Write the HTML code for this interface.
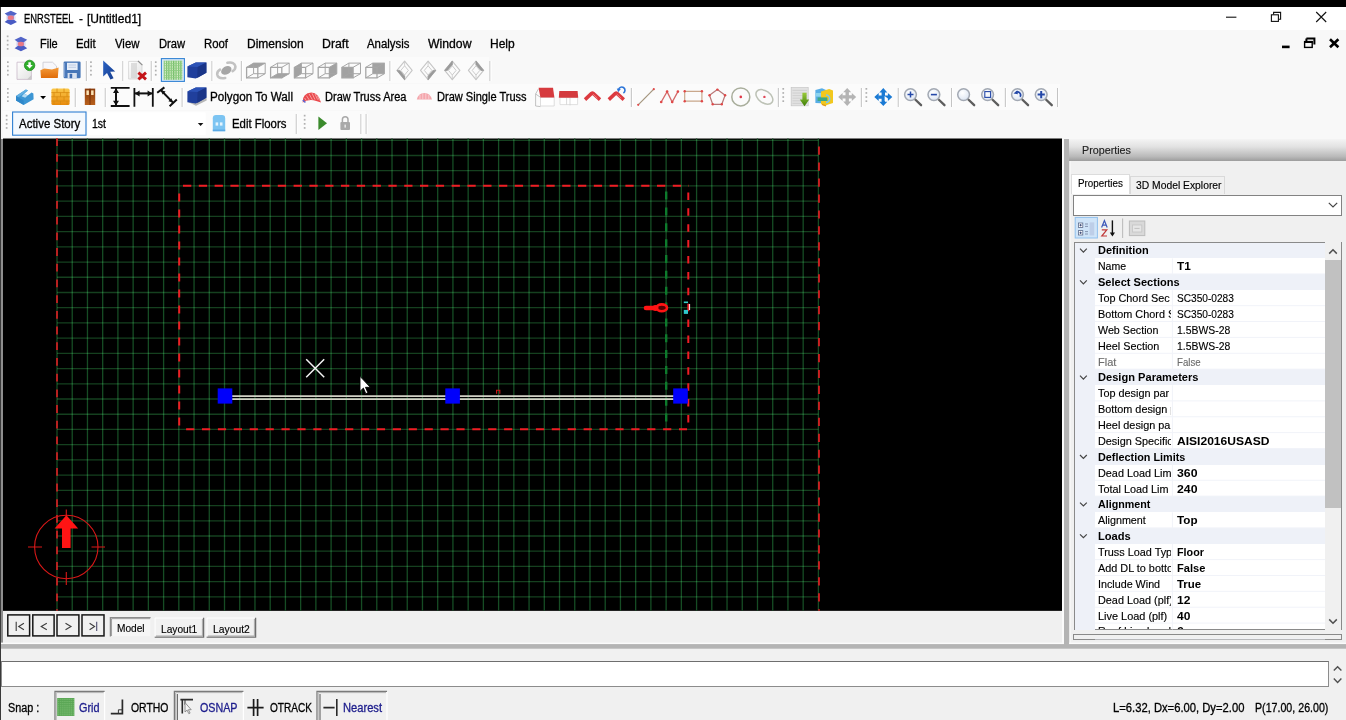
<!DOCTYPE html>
<html><head><meta charset="utf-8"><title>ENRSTEEL - [Untitled1]</title><style>
html,body{margin:0;padding:0;background:#f0f0f0;}
body{width:1346px;height:720px;position:relative;overflow:hidden;font-family:"Liberation Sans", sans-serif;}
body>div,body>span,body>svg{position:absolute;}
body>span{white-space:pre;line-height:1;transform-origin:0 0;}
body>div{box-sizing:border-box;}
.t{position:absolute;white-space:pre;line-height:1;transform-origin:0 0;}
</style></head>
<body>
<div style="left:0px;top:0px;width:1346px;height:7px;background:#000;"></div>
<div style="left:0px;top:7px;width:1346px;height:23px;background:#fff;"></div>
<div style="left:0px;top:30px;width:1346px;height:109px;background:#f8f8f8;"></div>
<div style="left:0px;top:7px;width:1px;height:713px;background:#3a3a3a;"></div>
<div style="left:1px;top:30px;width:1345px;height:27px;background:#f8f8f8;"></div>
<div style="left:3px;top:57px;width:485.5px;height:26px;background:#fbfbfb;"></div>
<div style="left:3px;top:84px;width:1057px;height:26px;background:#fbfbfb;"></div>
<div style="left:3px;top:110.5px;width:363px;height:26.5px;background:#fbfbfb;"></div>
<svg style="left:0px;top:30px;" width="1346" height="109" viewBox="0 30 1346 109"><defs>
<linearGradient id="gPage" x1="0" y1="0" x2="1" y2="1"><stop offset="0" stop-color="#fff"/><stop offset="1" stop-color="#e2e2e2"/></linearGradient>
<linearGradient id="gOr" x1="0" y1="0" x2="0" y2="1"><stop offset="0" stop-color="#f39a3a"/><stop offset="1" stop-color="#e06c08"/></linearGradient>
<linearGradient id="gWall" x1="0" y1="0" x2="0" y2="1"><stop offset="0" stop-color="#fbc84a"/><stop offset="1" stop-color="#e88a0c"/></linearGradient>
<linearGradient id="gDoor" x1="0" y1="0" x2="0" y2="1"><stop offset="0" stop-color="#8a3c0c"/><stop offset="1" stop-color="#b8601c"/></linearGradient>
<linearGradient id="gGreen" x1="0" y1="0" x2="0" y2="1"><stop offset="0" stop-color="#9acb3a"/><stop offset="1" stop-color="#3f7f08"/></linearGradient>
<linearGradient id="gBlueArrow" x1="0" y1="0" x2="1" y2="1"><stop offset="0" stop-color="#2a62c4"/><stop offset="1" stop-color="#163c8c"/></linearGradient>
<radialGradient id="gLens" cx=".4" cy=".35" r=".7"><stop offset="0" stop-color="#fff"/><stop offset="1" stop-color="#dbe4f2"/></radialGradient>
<pattern id="pGrid" x="163.5" y="60.5" width="2.4" height="2.4" patternUnits="userSpaceOnUse"><rect width="2.4" height="2.4" fill="#d6eec6"/><path d="M.6 0V2.4" stroke="#6cba62" stroke-width="1.1"/><path d="M0 .5H2.4" stroke="#8ccc80" stroke-width=".8"/></pattern>
<pattern id="pGrid2" x="57.2" y="698" width="2.1" height="2.1" patternUnits="userSpaceOnUse"><rect width="2.1" height="2.1" fill="#74b96c"/><path d="M0 .4H2.1M.4 0V2.1" stroke="#5aa655" stroke-width=".8"/></pattern>
</defs><rect x="6.8" y="35.5" width="1.7" height="1.7" fill="#b0b0b0"/><rect x="6.8" y="39.7" width="1.7" height="1.7" fill="#b0b0b0"/><rect x="6.8" y="43.9" width="1.7" height="1.7" fill="#b0b0b0"/><rect x="6.8" y="48.0" width="1.7" height="1.7" fill="#b0b0b0"/><g transform="translate(20.9 44) scale(1.0)"><ellipse cx="0" cy="0" rx="5" ry="5.6" fill="#cfc8ee" opacity=".55"/><path d="M0 -7.3L6.3 -4.3L3.2 -2H-3.2L-6.3 -4.3Z" fill="#5264c8"/><path d="M0 7.3L6.3 4.3L3.2 2H-3.2L-6.3 4.3Z" fill="#4a5cc4"/><path d="M-3.2 -2H3.2V2H-3.2Z" fill="#9c94d8"/><ellipse cx="0" cy="0" rx="3" ry="2.3" fill="#ea7884"/></g><rect x="1282" y="45.6" width="7.6" height="2.6" fill="#000"/><path d="M1306.4 38.4H1314.4V44.4M1306.4 38.4V41" stroke="#000" stroke-width="2" fill="none"/><rect x="1304.6" y="41.6" width="7.6" height="5.8" stroke="#000" stroke-width="1.4" fill="none"/><path d="M1304 42H1312.8" stroke="#000" stroke-width="2"/><path d="M1330 39.2L1338.4 47.2M1338.4 39.2L1330 47.2" stroke="#000" stroke-width="2.6"/><rect x="7.0" y="61.3" width="1.7" height="1.7" fill="#b0b0b0"/><rect x="7.0" y="65.5" width="1.7" height="1.7" fill="#b0b0b0"/><rect x="7.0" y="69.7" width="1.7" height="1.7" fill="#b0b0b0"/><rect x="7.0" y="73.9" width="1.7" height="1.7" fill="#b0b0b0"/><rect x="90.1" y="61.3" width="1.7" height="1.7" fill="#b0b0b0"/><rect x="90.1" y="65.5" width="1.7" height="1.7" fill="#b0b0b0"/><rect x="90.1" y="69.7" width="1.7" height="1.7" fill="#b0b0b0"/><rect x="90.1" y="73.9" width="1.7" height="1.7" fill="#b0b0b0"/><rect x="154.9" y="61.3" width="1.7" height="1.7" fill="#b0b0b0"/><rect x="154.9" y="65.5" width="1.7" height="1.7" fill="#b0b0b0"/><rect x="154.9" y="69.7" width="1.7" height="1.7" fill="#b0b0b0"/><rect x="154.9" y="73.9" width="1.7" height="1.7" fill="#b0b0b0"/><path d="M86.4 61V81" stroke="#c2c2c2" stroke-width="1.1"/><path d="M87.4 61V81" stroke="#fff" stroke-width="1"/><path d="M122.9 61V81" stroke="#c2c2c2" stroke-width="1.1"/><path d="M123.9 61V81" stroke="#fff" stroke-width="1"/><path d="M151.3 61V81" stroke="#c2c2c2" stroke-width="1.1"/><path d="M152.3 61V81" stroke="#fff" stroke-width="1"/><path d="M212.0 61V81" stroke="#c2c2c2" stroke-width="1.1"/><path d="M213.0 61V81" stroke="#fff" stroke-width="1"/><path d="M241.4 61V81" stroke="#c2c2c2" stroke-width="1.1"/><path d="M242.4 61V81" stroke="#fff" stroke-width="1"/><path d="M390.0 61V81" stroke="#c2c2c2" stroke-width="1.1"/><path d="M391.0 61V81" stroke="#fff" stroke-width="1"/><path d="M490.0 61V81" stroke="#c2c2c2" stroke-width="1.1"/><path d="M491.0 61V81" stroke="#fff" stroke-width="1"/><path d="M17 62.2H27.2L31.4 66.6V79.4H17Z" fill="url(#gPage)" stroke="#c9b9c9" stroke-width=".8"/><path d="M31.4 75L27 79.4H31.4Z" fill="#c8c8c8"/><circle cx="29.6" cy="65.4" r="5.2" fill="#2fae2a" stroke="#1e8c1e" stroke-width=".8"/><path d="M28.4 62.2H30.8V65H32.8L29.6 68.6L26.4 65H28.4Z" fill="#fff"/><path d="M43 62.2H52.5L56.5 66V72H43Z" fill="#f7f7fb" stroke="#c8c8d0" stroke-width=".8"/><path d="M40.4 70.2L44.4 68.4L52 69.6L58.6 67.6L57.8 78H41Z" fill="url(#gOr)"/><rect x="63.6" y="61.6" width="17" height="16.6" rx="1.2" fill="#4877b8"/><rect x="67" y="62.8" width="10.6" height="7.2" fill="#e6edf8"/><path d="M68.5 65H76M68.5 67.3H76" stroke="#b4c4de" stroke-width=".8"/><rect x="67.6" y="73" width="9.2" height="5.2" fill="#d9e2f0"/><rect x="69.6" y="73.8" width="2.6" height="4.4" fill="#3f6cb0"/><path d="M64.6 63V77" stroke="#7fa2d4" stroke-width="1"/><path d="M103.2 60.6V76.4L107 73L110.4 79.6L113.6 78.2L110.2 71.8L115.2 71.6Z" fill="url(#gBlueArrow)"/><path d="M128.6 61.4H138L142 65.4V79H128.6Z" fill="url(#gPage)" stroke="#cfcfcf" stroke-width=".7"/><path d="M131 63H137V78H131Z" fill="#d2d2d2" opacity=".7"/><path d="M138 60.8L142.4 65.2" stroke="#8a8a8a" stroke-width="1.2"/><path d="M138.4 72.6L146 79.4M146 72.6L138.4 79.4" stroke="#c41418" stroke-width="2.9"/><rect x="161.4" y="58.6" width="23" height="22.8" fill="#d6e8f8" stroke="#3584d4" stroke-width="1.1"/><rect x="163.6" y="60.6" width="18.8" height="19.2" fill="url(#pGrid)"/><g transform="translate(187 62)"><path d="M0.4 4.6L8.8 0.6H19.4V10.8L8.8 16.4L0.4 15.2Z" fill="#203f9c"/><path d="M0.4 4.6L8.8 0.6H19.4L10.6 5Z" fill="#2c52b6"/><path d="M10.6 5L19.4 0.6V10.8L10.2 16Z" fill="#1a3588"/></g><path d="M227.4 62.8Q234.6 61.6 235.4 66.4Q235.6 69.4 232.6 71.2" stroke="#c2c2c2" stroke-width="2.6" fill="none" stroke-linecap="round"/><path d="M225.2 78Q218 79.2 217.2 74.4Q217 71.4 220 69.6" stroke="#c2c2c2" stroke-width="2.6" fill="none" stroke-linecap="round"/><ellipse cx="226.3" cy="70.4" rx="5.6" ry="3.9" transform="rotate(-32 226.3 70.4)" fill="#a6a6a6"/><g transform="translate(246 62.5)" stroke="#a6a6a6" stroke-width="1.3" fill="none" stroke-linejoin="round"><path d="M0.6 4.8L7.6 .6H19.2L11.8 4.8Z" fill="#a2a2a2" stroke="none"/><path d="M0.6 4.8H11.8V15.4H0.6Z"/><path d="M7.6 .6H19.2V11.2H7.6Z" stroke-width="1"/><path d="M0.6 4.8L7.6 .6M11.8 4.8L19.2 .6M0.6 15.4L7.6 11.2M11.8 15.4L19.2 11.2" stroke-width="1"/></g><g transform="translate(270 62.5)" stroke="#a6a6a6" stroke-width="1.3" fill="none" stroke-linejoin="round"><path d="M0.6 15.4L7.6 11.2H19.2L11.8 15.4Z" fill="#a2a2a2" stroke="none"/><path d="M0.6 4.8H11.8V15.4H0.6Z"/><path d="M7.6 .6H19.2V11.2H7.6Z" stroke-width="1"/><path d="M0.6 4.8L7.6 .6M11.8 4.8L19.2 .6M0.6 15.4L7.6 11.2M11.8 15.4L19.2 11.2" stroke-width="1"/></g><g transform="translate(293.8 62.5)" stroke="#a6a6a6" stroke-width="1.3" fill="none" stroke-linejoin="round"><path d="M0.6 4.8L7.6 .6V11.2L0.6 15.4Z" fill="#a2a2a2" stroke="none"/><path d="M0.6 4.8H11.8V15.4H0.6Z"/><path d="M7.6 .6H19.2V11.2H7.6Z" stroke-width="1"/><path d="M0.6 4.8L7.6 .6M11.8 4.8L19.2 .6M0.6 15.4L7.6 11.2M11.8 15.4L19.2 11.2" stroke-width="1"/></g><g transform="translate(317.6 62.5)" stroke="#a6a6a6" stroke-width="1.3" fill="none" stroke-linejoin="round"><path d="M11.8 4.8L19.2 .6V11.2L11.8 15.4Z" fill="#a2a2a2" stroke="none"/><path d="M0.6 4.8H11.8V15.4H0.6Z"/><path d="M7.6 .6H19.2V11.2H7.6Z" stroke-width="1"/><path d="M0.6 4.8L7.6 .6M11.8 4.8L19.2 .6M0.6 15.4L7.6 11.2M11.8 15.4L19.2 11.2" stroke-width="1"/></g><g transform="translate(341.3 62.5)" stroke="#a6a6a6" stroke-width="1.3" fill="none" stroke-linejoin="round"><path d="M0.6 4.8H11.8V15.4H0.6Z" fill="#a2a2a2" stroke="none"/><path d="M0.6 4.8H11.8V15.4H0.6Z"/><path d="M7.6 .6H19.2V11.2H7.6Z" stroke-width="1"/><path d="M0.6 4.8L7.6 .6M11.8 4.8L19.2 .6M0.6 15.4L7.6 11.2M11.8 15.4L19.2 11.2" stroke-width="1"/></g><g transform="translate(365.2 62.5)" stroke="#a6a6a6" stroke-width="1.3" fill="none" stroke-linejoin="round"><path d="M7.6 .6H19.2V11.2H7.6Z" fill="#a2a2a2" stroke="none"/><path d="M0.6 4.8H11.8V15.4H0.6Z"/><path d="M7.6 .6H19.2V11.2H7.6Z" stroke-width="1"/><path d="M0.6 4.8L7.6 .6M11.8 4.8L19.2 .6M0.6 15.4L7.6 11.2M11.8 15.4L19.2 11.2" stroke-width="1"/></g><g transform="translate(404.6 70.4)" stroke="#c6c6c6" stroke-width="1.1" fill="none" stroke-linejoin="round"><path d="M0 -9.3L7.6 0L0 9.3L-7.6 0Z"/><path d="M0 -4.6L3.8 0L0 4.6L-3.8 0Z" stroke-width=".9"/><path d="M0 4.6V9.3M0 -4.6V-9.3" stroke-width=".8"/><path d="M-7.6 0L0 9.3L0 5.9L-4.9 0Z" fill="#9a9a9a" stroke="#9a9a9a" stroke-width=".8"/></g><g transform="translate(428.1 70.4)" stroke="#c6c6c6" stroke-width="1.1" fill="none" stroke-linejoin="round"><path d="M0 -9.3L7.6 0L0 9.3L-7.6 0Z"/><path d="M0 -4.6L3.8 0L0 4.6L-3.8 0Z" stroke-width=".9"/><path d="M0 4.6V9.3M0 -4.6V-9.3" stroke-width=".8"/><path d="M7.6 0L0 9.3L0 5.9L4.9 0Z" fill="#9a9a9a" stroke="#9a9a9a" stroke-width=".8"/></g><g transform="translate(452.3 70.4)" stroke="#c6c6c6" stroke-width="1.1" fill="none" stroke-linejoin="round"><path d="M0 -9.3L7.6 0L0 9.3L-7.6 0Z"/><path d="M0 -4.6L3.8 0L0 4.6L-3.8 0Z" stroke-width=".9"/><path d="M0 4.6V9.3M0 -4.6V-9.3" stroke-width=".8"/><path d="M-7.6 0L0 -9.3L0 -5.9L-4.9 0Z" fill="#9a9a9a" stroke="#9a9a9a" stroke-width=".8"/></g><g transform="translate(476 70.4)" stroke="#c6c6c6" stroke-width="1.1" fill="none" stroke-linejoin="round"><path d="M0 -9.3L7.6 0L0 9.3L-7.6 0Z"/><path d="M0 -4.6L3.8 0L0 4.6L-3.8 0Z" stroke-width=".9"/><path d="M0 4.6V9.3M0 -4.6V-9.3" stroke-width=".8"/><path d="M7.6 0L0 -9.3L0 -5.9L4.9 0Z" fill="#9a9a9a" stroke="#9a9a9a" stroke-width=".8"/></g><rect x="7.0" y="88.0" width="1.7" height="1.7" fill="#b0b0b0"/><rect x="7.0" y="92.1" width="1.7" height="1.7" fill="#b0b0b0"/><rect x="7.0" y="96.2" width="1.7" height="1.7" fill="#b0b0b0"/><rect x="7.0" y="100.3" width="1.7" height="1.7" fill="#b0b0b0"/><rect x="782.4" y="88.0" width="1.7" height="1.7" fill="#b0b0b0"/><rect x="782.4" y="92.1" width="1.7" height="1.7" fill="#b0b0b0"/><rect x="782.4" y="96.2" width="1.7" height="1.7" fill="#b0b0b0"/><rect x="782.4" y="100.3" width="1.7" height="1.7" fill="#b0b0b0"/><rect x="865.5" y="88.0" width="1.7" height="1.7" fill="#b0b0b0"/><rect x="865.5" y="92.1" width="1.7" height="1.7" fill="#b0b0b0"/><rect x="865.5" y="96.2" width="1.7" height="1.7" fill="#b0b0b0"/><rect x="865.5" y="100.3" width="1.7" height="1.7" fill="#b0b0b0"/><path d="M75.3 88V107" stroke="#c2c2c2" stroke-width="1.1"/><path d="M76.3 88V107" stroke="#fff" stroke-width="1"/><path d="M105.3 88V107" stroke="#c2c2c2" stroke-width="1.1"/><path d="M106.3 88V107" stroke="#fff" stroke-width="1"/><path d="M182.2 88V107" stroke="#c2c2c2" stroke-width="1.1"/><path d="M183.2 88V107" stroke="#fff" stroke-width="1"/><path d="M631.4 88V107" stroke="#c2c2c2" stroke-width="1.1"/><path d="M632.4 88V107" stroke="#fff" stroke-width="1"/><path d="M778.4 88V107" stroke="#c2c2c2" stroke-width="1.1"/><path d="M779.4 88V107" stroke="#fff" stroke-width="1"/><path d="M861.4 88V107" stroke="#c2c2c2" stroke-width="1.1"/><path d="M862.4 88V107" stroke="#fff" stroke-width="1"/><path d="M898.3 88V107" stroke="#c2c2c2" stroke-width="1.1"/><path d="M899.3 88V107" stroke="#fff" stroke-width="1"/><path d="M951.6 88V107" stroke="#c2c2c2" stroke-width="1.1"/><path d="M952.6 88V107" stroke="#fff" stroke-width="1"/><path d="M1005.4 88V107" stroke="#c2c2c2" stroke-width="1.1"/><path d="M1006.4 88V107" stroke="#fff" stroke-width="1"/><path d="M1057.6 88V107" stroke="#c2c2c2" stroke-width="1.1"/><path d="M1058.6 88V107" stroke="#fff" stroke-width="1"/><path d="M16 96L25.9 89.4L28 90.6L24.4 93.4L27.6 95.4L31.6 92.6L33.4 93.6L33.6 99.2L23.7 105L16 100.6Z" fill="#3c96d4"/><path d="M16 96L25.9 89.4L28 90.6L18.4 97.2Z" fill="#63b0e2"/><path d="M21.6 96.2L24.4 93.4L27.6 95.4L25.2 97.8Z" fill="#b4dcf4"/><path d="M16 96L23.7 100.4V105L16 100.6Z" fill="#2f88ca"/><path d="M40.2 96H46L43.1 99.2Z" fill="#000"/><rect x="51.4" y="88.6" width="18.2" height="16.4" rx="1.6" fill="url(#gWall)"/><path d="M51.4 92.6H69.6M51.4 96.8H69.6M51.4 101H69.6M57 88.6V92.6M64 88.6V92.6M54 92.6V96.8M60.5 92.6V96.8M67 92.6V96.8M57 96.8V101M64 96.8V101M54 101V105M60.5 101V105M67 101V105" stroke="#d88a10" stroke-width=".8" fill="none"/><rect x="84.8" y="88.6" width="10.4" height="16.4" fill="url(#gDoor)"/><path d="M90 88.6V105" stroke="#6e2c06" stroke-width=".8"/><rect x="86.4" y="90.4" width="2.5" height="4.6" fill="#fbe2b4"/><rect x="91.1" y="90.4" width="2.5" height="4.6" fill="#fbe2b4"/><path d="M110.8 87.8H129.6M110.8 106H129.6" stroke="#111" stroke-width="1.8"/><path d="M116 88V106" stroke="#111" stroke-width="2"/><path d="M116 88.2L119 93H113ZM116 105.6L119 100.8H113Z" fill="#111"/><path d="M134.4 88V106.8M152.8 88V106.8" stroke="#111" stroke-width="1.8"/><path d="M134.4 93.4H152.8" stroke="#111" stroke-width="2"/><path d="M134.8 93.4L139.6 90.4V96.4ZM152.4 93.4L147.6 90.4V96.4Z" fill="#111"/><path d="M161 90.2L173 102.6" stroke="#111" stroke-width="2"/><path d="M157.2 92.8L164.4 87.4M169.6 106.2L176.8 99.6" stroke="#111" stroke-width="2"/><path d="M161 90.2L165.6 91.6L162.6 94.6ZM173 102.6L168.4 101.2L171.4 98.2Z" fill="#111"/><g transform="translate(187 87)"><path d="M1.4 15.2L9 18.8L19.6 13.6L19.6 11Z" fill="#9a9a9a" opacity=".7"/><path d="M0.4 4.6L8.8 0.6H19.4V10.8L8.8 16.4L0.4 15.2Z" fill="#203f9c"/><path d="M0.4 4.6L8.8 0.6H19.4L10.6 5Z" fill="#2c52b6"/><path d="M10.6 5L19.4 0.6V10.8L10.2 16Z" fill="#1a3588"/></g><path d="M302.6 102.4Q302.6 93 311.4 92.6Q318.6 93.2 321 102.6L316.2 101Q311 99 307.4 100.6Z" fill="#ea4a4e"/><path d="M304.6 98L306.6 101M306.4 95.6L309.4 100.2M309 93.8L312.4 99.8M312 93.2L315 99.6M315 94L317.6 99.6M317.6 96L319.4 100.4" stroke="#f9b4b4" stroke-width=".8"/><path d="M302.8 100L305.4 102.6" stroke="#5a6ad8" stroke-width="1.4"/><path d="M416.8 99.6Q418 93.4 424.4 93Q430.6 93.4 432 99.6Z" fill="#f4a6ac"/><path d="M420 95V99.6M422.8 93.6V99.6M425.8 93.6V99.6M428.8 95V99.6" stroke="#fbd8da" stroke-width=".8"/><path d="M540.5 97.3H554.2V106H540.5Z" fill="#fff" stroke="#d0d0d0" stroke-width=".7"/><path d="M535.6 106V94L538.4 89M535.6 106L540.5 106.6M535.6 94L540.5 97.3" stroke="#b4b4b4" stroke-width=".8" fill="none"/><path d="M538.6 87.8H553L554.4 97.4H540.4Z" fill="#d63a3e"/><path d="M560 97.6H577.6V104.6H560Z" fill="#fff" stroke="#d4d4d4" stroke-width=".7"/><path d="M566.6 97.6V104.6M570 97.6V105.4" stroke="#cfcfcf" stroke-width=".8"/><path d="M559.3 91H577.6L578.2 97.8H558.8Z" fill="#d43a3e"/><path d="M585 99.6L591.6 93.4Q592.4 92.8 593.2 93.4L600 99.6" stroke="#dc3a40" stroke-width="3.5" fill="none" stroke-linejoin="round"/><path d="M593 94.2L597.4 98.2" stroke="#f07a7e" stroke-width="1" fill="none"/><path d="M608.8 99.6L615.4 93.4Q616.1999999999999 92.8 617.0 93.4L623.8 99.6" stroke="#dc3a40" stroke-width="3.5" fill="none" stroke-linejoin="round"/><path d="M616.8 94.2L621.1999999999999 98.2" stroke="#f07a7e" stroke-width="1" fill="none"/><path d="M623.4 93A3.2 3.2 0 1 0 618.6 90" stroke="#2b74d8" stroke-width="1.6" fill="none"/><path d="M616.8 88.6L620.8 89L618.2 92.2Z" fill="#2b74d8"/><path d="M638.2 104.8L653.8 89.2" stroke="#a4957e" stroke-width="1.2"/><circle cx="638.2" cy="104.8" r="1.1" fill="#e04a4a"/><circle cx="653.8" cy="89.2" r="1.1" fill="#e04a4a"/><path d="M661.2 102L667.1 91.6L672.2 102L677.9 91.6" stroke="#d46a6a" stroke-width="1.3" fill="none"/><circle cx="661.2" cy="102" r="1.3" fill="#e04848"/><circle cx="667.1" cy="91.6" r="1.3" fill="#e04848"/><circle cx="672.2" cy="102" r="1.3" fill="#e04848"/><circle cx="677.9" cy="91.6" r="1.3" fill="#e04848"/><path d="M684.7 91.3H701.9V101.2H684.7Z" stroke="#c9a88c" stroke-width="1.2" fill="none"/><circle cx="684.7" cy="91.3" r="1.2" fill="#e04848"/><circle cx="701.9" cy="91.3" r="1.2" fill="#e04848"/><circle cx="701.9" cy="101.2" r="1.2" fill="#e04848"/><circle cx="684.7" cy="101.2" r="1.2" fill="#e04848"/><path d="M717.4 89.6L725.1 95.2L721.8 104.3L712.7 104.3L709.5 95.2Z" stroke="#b87878" stroke-width="1.2" fill="none"/><circle cx="717.4" cy="89.6" r="1.2" fill="#e04848"/><circle cx="725.1" cy="95.2" r="1.2" fill="#e04848"/><circle cx="721.8" cy="104.3" r="1.2" fill="#e04848"/><circle cx="712.7" cy="104.3" r="1.2" fill="#e04848"/><circle cx="709.5" cy="95.2" r="1.2" fill="#e04848"/><circle cx="740.8" cy="96.9" r="9" stroke="#a9ae9c" stroke-width="1.5" fill="none"/><circle cx="740.8" cy="96.9" r="1.3" fill="#e03848"/><ellipse cx="764.4" cy="96.9" rx="9.4" ry="6" transform="rotate(35 764.4 96.9)" stroke="#bdc2b6" stroke-width="1.5" fill="none"/><circle cx="764.4" cy="96.9" r="1.2" fill="#e04858"/><rect x="791.2" y="87.6" width="17" height="18.2" fill="#e2e2e2" stroke="#c6c6c6" stroke-width=".7"/><path d="M792.5 90.4H807M792.5 93H807M792.5 95.6H807M792.5 98.2H807M792.5 100.8H807M792.5 103.4H807" stroke="#cbcbcb" stroke-width=".8"/><path d="M802.4 92.8H806.6V99.4H809.2L804.5 106.2L799.8 99.4H802.4Z" fill="url(#gGreen)"/><path d="M815.4 90L822 88.2L826 90V103.4L815.4 103Z" fill="#58aee6"/><path d="M815.8 93H824V96.6H815.8Z" fill="#8cd4ee"/><path d="M821 91.4L829.2 89L833 90.4V103L824.4 105.8L821 104Z" fill="#f2c81e"/><path d="M817.6 97.4H827.4V101H817.6Z" fill="#3ea886"/><path d="M826 95A3.6 3.6 0 0 1 826 102.4" stroke="#7cc8f0" stroke-width="1.6" fill="none"/><path d="M822 104.4L826 105.8" stroke="#e09a18" stroke-width="1.4"/><g transform="translate(847.2 96.9)" fill="#b4b4b4"><path d="M-1.7 -5H1.7V-1.7H5V1.7H1.7V5H-1.7V1.7H-5V-1.7H-1.7Z"/><path d="M0 -9L4 -4.6H-4ZM0 9L4 4.6H-4ZM-9 0L-4.6 -4V4ZM9 0L4.6 -4V4Z"/></g><g transform="translate(883.3 97.1)" fill="#1a7ad4"><path d="M-1.7 -5H1.7V-1.7H5V1.7H1.7V5H-1.7V1.7H-5V-1.7H-1.7Z"/><path d="M0 -9L4 -4.6H-4ZM0 9L4 4.6H-4ZM-9 0L-4.6 -4V4ZM9 0L4.6 -4V4Z"/></g><path d="M884.6 96L888 98.6L884.6 101.2Z" fill="#fff"/><path d="M914.7 99.0L921.1 105.19999999999999" stroke="#5e5e5e" stroke-width="2.3" stroke-linecap="round"/><circle cx="910.5" cy="94.6" r="5.9" fill="url(#gLens)" stroke="#a3a9b3" stroke-width="1.5"/><g transform="translate(910.5 94.6)"><path d="M-3 0H3M0 -3V3" stroke="#2448a8" stroke-width="1.5"/></g><path d="M938.1 99.0L944.5 105.19999999999999" stroke="#5e5e5e" stroke-width="2.3" stroke-linecap="round"/><circle cx="933.9" cy="94.6" r="5.9" fill="url(#gLens)" stroke="#a3a9b3" stroke-width="1.5"/><g transform="translate(933.9 94.6)"><path d="M-3 0H3" stroke="#2448a8" stroke-width="1.6"/></g><path d="M967.8000000000001 99.0L974.2 105.19999999999999" stroke="#5e5e5e" stroke-width="2.3" stroke-linecap="round"/><circle cx="963.6" cy="94.6" r="5.9" fill="url(#gLens)" stroke="#a3a9b3" stroke-width="1.5"/><g transform="translate(963.6 94.6)"></g><path d="M991.8000000000001 99.0L998.2 105.19999999999999" stroke="#5e5e5e" stroke-width="2.3" stroke-linecap="round"/><circle cx="987.6" cy="94.6" r="5.9" fill="url(#gLens)" stroke="#a3a9b3" stroke-width="1.5"/><g transform="translate(987.6 94.6)"><rect x="-2.8" y="-3" width="5.8" height="5.8" stroke="#2448a8" stroke-width="1.1" fill="none"/></g><path d="M1021.7 99.0L1028.1 105.19999999999999" stroke="#5e5e5e" stroke-width="2.3" stroke-linecap="round"/><circle cx="1017.5" cy="94.6" r="5.9" fill="url(#gLens)" stroke="#a3a9b3" stroke-width="1.5"/><g transform="translate(1017.5 94.6)"><path d="M2.6 2.2A3.2 3.2 0 0 0 -1.4 -2.4" stroke="#2448a8" stroke-width="1.7" fill="none"/><path d="M-4 -1L-.2 -4.4L.4 -.4Z" fill="#2448a8"/></g><path d="M1045.4 99.0L1051.8 105.19999999999999" stroke="#5e5e5e" stroke-width="2.3" stroke-linecap="round"/><circle cx="1041.2" cy="94.6" r="5.9" fill="url(#gLens)" stroke="#a3a9b3" stroke-width="1.5"/><g transform="translate(1041.2 94.6)"><path d="M-3.6 0H3.6M0 -3.6V3.6" stroke="#2448a8" stroke-width="2"/></g><rect x="5.8" y="114.8" width="1.7" height="1.7" fill="#b0b0b0"/><rect x="5.8" y="118.9" width="1.7" height="1.7" fill="#b0b0b0"/><rect x="5.8" y="123.0" width="1.7" height="1.7" fill="#b0b0b0"/><rect x="5.8" y="127.1" width="1.7" height="1.7" fill="#b0b0b0"/><rect x="303.8" y="114.8" width="1.7" height="1.7" fill="#b0b0b0"/><rect x="303.8" y="118.9" width="1.7" height="1.7" fill="#b0b0b0"/><rect x="303.8" y="123.0" width="1.7" height="1.7" fill="#b0b0b0"/><rect x="303.8" y="127.1" width="1.7" height="1.7" fill="#b0b0b0"/><path d="M296.3 114V134" stroke="#c2c2c2" stroke-width="1.1"/><path d="M297.3 114V134" stroke="#fff" stroke-width="1"/><path d="M361.0 114V134" stroke="#c2c2c2" stroke-width="1.1"/><path d="M362.0 114V134" stroke="#fff" stroke-width="1"/><path d="M366.2 114V134" stroke="#c2c2c2" stroke-width="1.1"/><path d="M367.2 114V134" stroke="#fff" stroke-width="1"/><rect x="12.6" y="112" width="73.4" height="23.2" fill="#f4f9fe" stroke="#2f7fd2" stroke-width="1.1"/><rect x="87.6" y="112.4" width="118" height="22.6" fill="#fff"/><path d="M197.8 123H203.4L200.6 126Z" fill="#111"/><path d="M212.8 118.2Q212.8 115 216 115H222Q225.2 115 225.2 118.2V131.2H212.8Z" fill="#7cc4f2"/><rect x="215.6" y="122.4" width="2.6" height="3.2" fill="#e4f4fe"/><rect x="219.9" y="122.4" width="2.6" height="3.2" fill="#e4f4fe"/><path d="M212.8 129.6H225.2V131.2H212.8Z" fill="#5aa8e4"/><path d="M318.4 116.4L327 123.2L318.4 130Z" fill="#3a8a2c"/><rect x="340.4" y="122" width="9.6" height="8" rx="1" fill="#a9a9a9"/><path d="M342.4 122V119.6A2.8 2.8 0 0 1 348 119.6V122" stroke="#a9a9a9" stroke-width="1.5" fill="none"/><rect x="344.4" y="124.6" width="1.6" height="3" fill="#e4e4e4"/></svg>
<svg style="left:0px;top:7px;" width="1346" height="23" viewBox="0 7 1346 23"><g transform="translate(10.8 17.8) scale(0.98)"><ellipse cx="0" cy="0" rx="5" ry="5.6" fill="#cfc8ee" opacity=".55"/><path d="M0 -7.3L6.3 -4.3L3.2 -2H-3.2L-6.3 -4.3Z" fill="#5264c8"/><path d="M0 7.3L6.3 4.3L3.2 2H-3.2L-6.3 4.3Z" fill="#4a5cc4"/><path d="M-3.2 -2H3.2V2H-3.2Z" fill="#9c94d8"/><ellipse cx="0" cy="0" rx="3" ry="2.3" fill="#ea7884"/></g><path d="M1226 17.2H1236.4" stroke="#111" stroke-width="1.1"/><rect x="1271.4" y="14.8" width="7" height="6.6" stroke="#111" stroke-width="1.1" fill="none"/><path d="M1273.6 14.6V12.4H1280.6V19.2H1278.6" stroke="#111" stroke-width="1.1" fill="none"/><path d="M1316.2 12L1326.2 22M1326.2 12L1316.2 22" stroke="#111" stroke-width="1.1"/></svg>
<span style="left:210.0px;top:91.04px;font-size:12px;font-weight:400;color:#000;transform:scaleX(0.9720);-webkit-text-stroke:0.3px #000;">Polygon To Wall</span>
<span style="left:324.5px;top:91.04px;font-size:12px;font-weight:400;color:#000;transform:scaleX(0.9188);-webkit-text-stroke:0.3px #000;">Draw Truss Area</span>
<span style="left:437.4px;top:91.04px;font-size:12px;font-weight:400;color:#000;transform:scaleX(0.9202);-webkit-text-stroke:0.3px #000;">Draw Single Truss</span>
<span style="left:18.5px;top:117.94px;font-size:12px;font-weight:400;color:#000;transform:scaleX(0.9573);-webkit-text-stroke:0.3px #000;">Active Story</span>
<span style="left:91.5px;top:117.94px;font-size:12px;font-weight:400;color:#000;transform:scaleX(0.8741);-webkit-text-stroke:0.3px #000;">1st</span>
<span style="left:232.4px;top:117.94px;font-size:12px;font-weight:400;color:#000;transform:scaleX(0.9484);-webkit-text-stroke:0.3px #000;">Edit Floors</span>
<div style="left:1px;top:139px;width:2px;height:504px;background:#8e8e8e;"></div>
<svg style="left:3px;top:138px;" width="1059" height="473" viewBox="3 138 1059 473"><rect x="2" y="138.5" width="1060" height="472.35" fill="#000"/><path d="M57.00 138.5V610.85M72.23 138.5V610.85M87.46 138.5V610.85M102.68 138.5V610.85M117.91 138.5V610.85M133.14 138.5V610.85M148.37 138.5V610.85M163.60 138.5V610.85M178.82 138.5V610.85M194.05 138.5V610.85M209.28 138.5V610.85M224.51 138.5V610.85M239.74 138.5V610.85M254.96 138.5V610.85M270.19 138.5V610.85M285.42 138.5V610.85M300.65 138.5V610.85M315.88 138.5V610.85M331.10 138.5V610.85M346.33 138.5V610.85M361.56 138.5V610.85M376.79 138.5V610.85M392.02 138.5V610.85M407.24 138.5V610.85M422.47 138.5V610.85M437.70 138.5V610.85M452.93 138.5V610.85M468.16 138.5V610.85M483.38 138.5V610.85M498.61 138.5V610.85M513.84 138.5V610.85M529.07 138.5V610.85M544.30 138.5V610.85M559.52 138.5V610.85M574.75 138.5V610.85M589.98 138.5V610.85M605.21 138.5V610.85M620.44 138.5V610.85M635.66 138.5V610.85M650.89 138.5V610.85M666.12 138.5V610.85M681.35 138.5V610.85M696.58 138.5V610.85M711.80 138.5V610.85M727.03 138.5V610.85M742.26 138.5V610.85M757.49 138.5V610.85M772.72 138.5V610.85M787.94 138.5V610.85M803.17 138.5V610.85M818.40 138.5V610.85" stroke="#164c24" stroke-width="1.3" fill="none"/><path d="M57.00 140.28H818.40M57.00 155.50H818.40M57.00 170.72H818.40M57.00 185.94H818.40M57.00 201.16H818.40M57.00 216.38H818.40M57.00 231.60H818.40M57.00 246.82H818.40M57.00 262.04H818.40M57.00 277.26H818.40M57.00 292.48H818.40M57.00 307.70H818.40M57.00 322.92H818.40M57.00 338.14H818.40M57.00 353.36H818.40M57.00 368.58H818.40M57.00 383.80H818.40M57.00 399.02H818.40M57.00 414.24H818.40M57.00 429.46H818.40M57.00 444.68H818.40M57.00 459.90H818.40M57.00 475.12H818.40M57.00 490.34H818.40M57.00 505.56H818.40M57.00 520.78H818.40M57.00 536.00H818.40M57.00 551.22H818.40M57.00 566.44H818.40M57.00 581.66H818.40M57.00 596.88H818.40" stroke="#15401f" stroke-width="1.3" fill="none" style="mix-blend-mode:screen"/><path d="M666.2 186V423" stroke="#0d7a2c" stroke-width="2.4" stroke-dasharray="8 7.85" stroke-dashoffset="-5.6" fill="none"/><path d="M57 138.2V610.85" stroke="#f01c24" stroke-width="1.5" stroke-dasharray="7.8 7.9" fill="none"/><path d="M819 146.6V610.85" stroke="#f01c24" stroke-width="1.6" stroke-dasharray="8.2 7.75" fill="none"/><path d="M183 185.8H689" stroke="#f01c24" stroke-width="2" stroke-dasharray="8.3 7.5" fill="none"/><path d="M179.2 193.6V430" stroke="#f01c24" stroke-width="2" stroke-dasharray="7.8 8.2" fill="none"/><path d="M186.1 429.2H687" stroke="#f01c24" stroke-width="2" stroke-dasharray="8.2 7.7" fill="none"/><path d="M688.3 192.4V424" stroke="#f01c24" stroke-width="2" stroke-dasharray="7.5 8.4" fill="none"/><path d="M688.3 186V192" stroke="#f01c24" stroke-width="2" fill="none" opacity="0"/><path d="M225 396.1H680M225 399.15H680" stroke="#d2d2c6" stroke-width="1.85" fill="none"/><rect x="217.7" y="388.4" width="14.6" height="15.2" fill="#0000fb"/><rect x="445.3" y="388.4" width="14.6" height="15.2" fill="#0000fb"/><rect x="673.2" y="388.4" width="14.6" height="15.2" fill="#0000fb"/><path d="M496.6 393.8V390.2H499.8V393.8" stroke="#d01818" stroke-width="1.1" fill="none"/><path d="M306.2 359.2L324.2 377.2M324.2 359.2L306.2 377.2" stroke="#f4f4f4" stroke-width="1.5" fill="none"/><path d="M360 376.3v15.1l3.4-3.3 2.4 5.6 2.1-.9-2.4-5.5h4.8z" fill="#fff" stroke="#000" stroke-width="0.9" stroke-linejoin="miter"/><path d="M646 308H656" stroke="#ff1414" stroke-width="4.6" stroke-linecap="round" fill="none"/><ellipse cx="661.8" cy="307.8" rx="5.2" ry="3.4" stroke="#ff1414" stroke-width="2.6" fill="#500"/><circle cx="655.5" cy="308" r="3" fill="#ff1414"/><rect x="683.8" y="301.5" width="4.2" height="1.6" fill="#35d0c8"/><rect x="683.8" y="309.9" width="4.2" height="4" fill="#2fc8cc"/><path d="M689.5 304V310" stroke="#f0d8d8" stroke-width="1.2"/><circle cx="66.3" cy="547" r="31.7" stroke="#d81818" stroke-width="1.1" fill="none"/><path d="M28 547H42M91.5 547H105M66.3 509.5V518M66.3 572V585" stroke="#d81818" stroke-width="1.1" fill="none"/><path d="M66.4 515.2L78.2 528.6H70.6V548H62V528.6H54.6Z" fill="#ff1414"/></svg>
<div style="left:1062px;top:139px;width:2px;height:504px;background:#fbfbfb;"></div>
<div style="left:1064px;top:139px;width:5px;height:505px;background:#b4b4b4;"></div>
<div style="left:1069px;top:139px;width:277px;height:505px;background:#f0f0f0;"></div>
<svg style="left:1069px;top:161px" width="2" height="482" viewBox="1069 161 2 482"><rect x="1069" y="161" width="1.5" height="482" fill="#fbfbfb"/></svg>
<svg style="left:1069px;top:139px" width="1" height="505" viewBox="1069 139 1 505"><rect x="1069" y="139" width="0.25" height="505" fill="#b4b4b4"/></svg>
<div style="left:1069px;top:139px;width:277px;height:22px;background:linear-gradient(#f4f4f4 0%,#e2e2e2 35%,#b9b9b9 80%,#9c9c9c 100%);"></div>
<span style="left:1081.6px;top:144.89px;font-size:11px;font-weight:400;color:#222;transform:scaleX(0.9753);-webkit-text-stroke:0.15px #222;">Properties</span>
<div style="left:1070.6px;top:173.8px;width:59.4px;height:21px;background:#fff;border:1px solid #dcdcdc;border-bottom:none;"></div>
<div style="left:1130.4px;top:175.6px;width:94.4px;height:18.6px;background:#f0f0f0;border:1px solid #d9d9d9;border-bottom:none;"></div>
<span style="left:1077.5px;top:177.89px;font-size:11px;font-weight:400;color:#000;transform:scaleX(0.8935);-webkit-text-stroke:0.15px #000;">Properties</span>
<span style="left:1135.5px;top:179.69px;font-size:11px;font-weight:400;color:#000;transform:scaleX(0.9386);-webkit-text-stroke:0.15px #000;">3D Model Explorer</span>
<div style="left:1070.6px;top:194px;width:275.4px;height:448px;background:#f0f0f0;"></div>
<div style="left:1073.4px;top:195.4px;width:268.6px;height:20.2px;background:#fff;border:1px solid #828282;"></div>
<div style="left:1074px;top:241.6px;width:268px;height:388.79999999999995px;background:#fff;border:1px solid #8a8a8a;overflow:hidden;"></div>
<div style="left:1075px;top:242.6px;width:20px;height:387px;background:#eef1f8;"></div>
<div style="left:1075px;top:242.5px;width:250px;height:15.87px;background:#eef1f8;"></div>
<span style="left:1098.2px;top:245.49px;font-size:11px;font-weight:700;color:#000;transform:scaleX(0.9977);">Definition</span>
<span style="left:1098.2px;top:261.36px;font-size:11px;font-weight:400;color:#000;transform:scaleX(0.9576);-webkit-text-stroke:0.15px #000;">Name</span>
<span style="left:1176.6px;top:261.36px;font-size:11px;font-weight:700;color:#000;transform:scaleX(1.0745);">T1</span>
<div style="left:1075px;top:274.24px;width:250px;height:15.87px;background:#eef1f8;"></div>
<span style="left:1098.2px;top:277.23px;font-size:11px;font-weight:700;color:#000;transform:scaleX(1.0033);">Select Sections</span>
<span style="left:1098.2px;top:293.10px;font-size:11px;font-weight:400;color:#000;transform:scaleX(0.9860);width:74.44px;overflow:hidden;-webkit-text-stroke:0.15px #000;">Top Chord Sec</span>
<span style="left:1176.6px;top:293.10px;font-size:11px;font-weight:400;color:#000;transform:scaleX(0.9210);-webkit-text-stroke:0.15px #000;">SC350-0283</span>
<span style="left:1098.2px;top:308.97px;font-size:11px;font-weight:400;color:#000;transform:scaleX(0.9860);width:74.44px;overflow:hidden;-webkit-text-stroke:0.15px #000;">Bottom Chord S</span>
<span style="left:1176.6px;top:308.97px;font-size:11px;font-weight:400;color:#000;transform:scaleX(0.9210);-webkit-text-stroke:0.15px #000;">SC350-0283</span>
<span style="left:1098.2px;top:324.84px;font-size:11px;font-weight:400;color:#000;transform:scaleX(0.9715);-webkit-text-stroke:0.15px #000;">Web Section</span>
<span style="left:1176.6px;top:324.84px;font-size:11px;font-weight:400;color:#000;transform:scaleX(0.9476);-webkit-text-stroke:0.15px #000;">1.5BWS-28</span>
<span style="left:1098.2px;top:340.71px;font-size:11px;font-weight:400;color:#000;transform:scaleX(0.9844);-webkit-text-stroke:0.15px #000;">Heel Section</span>
<span style="left:1176.6px;top:340.71px;font-size:11px;font-weight:400;color:#000;transform:scaleX(0.9476);-webkit-text-stroke:0.15px #000;">1.5BWS-28</span>
<span style="left:1098.2px;top:356.58px;font-size:11px;font-weight:400;color:#6d6d6d;transform:scaleX(0.9976);-webkit-text-stroke:0.15px #6d6d6d;">Flat</span>
<span style="left:1176.6px;top:356.58px;font-size:11px;font-weight:400;color:#6d6d6d;transform:scaleX(0.8771);-webkit-text-stroke:0.15px #6d6d6d;">False</span>
<div style="left:1075px;top:369.46px;width:250px;height:15.87px;background:#eef1f8;"></div>
<span style="left:1098.2px;top:372.45px;font-size:11px;font-weight:700;color:#000;transform:scaleX(1.0083);">Design Parameters</span>
<span style="left:1098.2px;top:388.32px;font-size:11px;font-weight:400;color:#000;transform:scaleX(0.9860);width:74.44px;overflow:hidden;-webkit-text-stroke:0.15px #000;">Top design par</span>
<span style="left:1098.2px;top:404.19px;font-size:11px;font-weight:400;color:#000;transform:scaleX(0.9860);width:74.44px;overflow:hidden;-webkit-text-stroke:0.15px #000;">Bottom design p</span>
<span style="left:1098.2px;top:420.06px;font-size:11px;font-weight:400;color:#000;transform:scaleX(0.9860);width:74.44px;overflow:hidden;-webkit-text-stroke:0.15px #000;">Heel design pa</span>
<span style="left:1098.2px;top:435.93px;font-size:11px;font-weight:400;color:#000;transform:scaleX(0.9860);width:74.44px;overflow:hidden;-webkit-text-stroke:0.15px #000;">Design Specific</span>
<span style="left:1176.6px;top:435.93px;font-size:11px;font-weight:700;color:#000;transform:scaleX(1.0963);">AISI2016USASD</span>
<div style="left:1075px;top:448.81px;width:250px;height:15.87px;background:#eef1f8;"></div>
<span style="left:1098.2px;top:451.80px;font-size:11px;font-weight:700;color:#000;transform:scaleX(0.9850);">Deflection Limits</span>
<span style="left:1098.2px;top:467.67px;font-size:11px;font-weight:400;color:#000;transform:scaleX(0.9860);width:74.44px;overflow:hidden;-webkit-text-stroke:0.15px #000;">Dead Load Lim</span>
<span style="left:1176.6px;top:467.67px;font-size:11px;font-weight:700;color:#000;transform:scaleX(1.1166);">360</span>
<span style="left:1098.2px;top:483.54px;font-size:11px;font-weight:400;color:#000;transform:scaleX(0.9860);width:74.44px;overflow:hidden;-webkit-text-stroke:0.15px #000;">Total Load Lim</span>
<span style="left:1176.6px;top:483.54px;font-size:11px;font-weight:700;color:#000;transform:scaleX(1.1166);">240</span>
<div style="left:1075px;top:496.42px;width:250px;height:15.87px;background:#eef1f8;"></div>
<span style="left:1098.2px;top:499.41px;font-size:11px;font-weight:700;color:#000;transform:scaleX(0.9743);">Alignment</span>
<span style="left:1098.2px;top:515.28px;font-size:11px;font-weight:400;color:#000;transform:scaleX(0.9771);-webkit-text-stroke:0.15px #000;">Alignment</span>
<span style="left:1176.6px;top:515.28px;font-size:11px;font-weight:700;color:#000;transform:scaleX(1.0598);">Top</span>
<div style="left:1075px;top:528.16px;width:250px;height:15.87px;background:#eef1f8;"></div>
<span style="left:1098.2px;top:531.15px;font-size:11px;font-weight:700;color:#000;transform:scaleX(1.0122);">Loads</span>
<span style="left:1098.2px;top:547.02px;font-size:11px;font-weight:400;color:#000;transform:scaleX(0.9860);width:74.44px;overflow:hidden;-webkit-text-stroke:0.15px #000;">Truss Load Typ</span>
<span style="left:1176.6px;top:547.02px;font-size:11px;font-weight:700;color:#000;transform:scaleX(0.9782);">Floor</span>
<span style="left:1098.2px;top:562.89px;font-size:11px;font-weight:400;color:#000;transform:scaleX(0.9860);width:74.44px;overflow:hidden;-webkit-text-stroke:0.15px #000;">Add DL to botto</span>
<span style="left:1176.6px;top:562.89px;font-size:11px;font-weight:700;color:#000;transform:scaleX(1.0092);">False</span>
<span style="left:1098.2px;top:578.76px;font-size:11px;font-weight:400;color:#000;transform:scaleX(0.9765);-webkit-text-stroke:0.15px #000;">Include Wind</span>
<span style="left:1176.6px;top:578.76px;font-size:11px;font-weight:700;color:#000;transform:scaleX(1.0416);">True</span>
<span style="left:1098.2px;top:594.63px;font-size:11px;font-weight:400;color:#000;transform:scaleX(0.9860);width:74.44px;overflow:hidden;-webkit-text-stroke:0.15px #000;">Dead Load (plf)</span>
<span style="left:1176.6px;top:594.63px;font-size:11px;font-weight:700;color:#000;transform:scaleX(1.0939);">12</span>
<span style="left:1098.2px;top:610.50px;font-size:11px;font-weight:400;color:#000;transform:scaleX(0.9926);-webkit-text-stroke:0.15px #000;">Live Load (plf)</span>
<span style="left:1176.6px;top:610.50px;font-size:11px;font-weight:700;color:#000;transform:scaleX(1.0939);">40</span>
<span style="left:1098.2px;top:626.37px;font-size:11px;font-weight:400;color:#000;transform:scaleX(0.9860);width:74.44px;overflow:hidden;height:3.03px;overflow:hidden;-webkit-text-stroke:0.15px #000;">Roof Live Load</span>
<span style="left:1176.6px;top:626.37px;font-size:11px;font-weight:700;color:#000;transform:scaleX(1.1429);height:3.03px;overflow:hidden;">0</span>
<div style="left:1325px;top:242.4px;width:16.4px;height:387.4px;background:#f0f0f0;"></div>
<div style="left:1325px;top:260px;width:16.4px;height:248.4px;background:#c1c1c1;"></div>
<div style="left:1073px;top:634px;width:269px;height:6px;background:#f0f0f0;border:1px solid #8a8a8a;"></div>
<svg style="left:1069px;top:139px;" width="277" height="504" viewBox="1069 139 277 504"><path d="M1328.8 202.8L1333 207L1337.2 202.8" stroke="#444" stroke-width="1.2" fill="none"/><rect x="1075.2" y="217.4" width="22.2" height="20.6" fill="#cfe4f8" stroke="#8fc0ee" stroke-width="1"/><rect x="1078.4" y="223" width="4.4" height="4.4" fill="#fff" stroke="#5a6a8a" stroke-width=".8"/><path d="M1079.4 225.2H1081.8M1080.6 224V226.4" stroke="#2a3a6a" stroke-width=".8"/><path d="M1085 224H1088M1085 226.4H1088" stroke="#7a8aa8" stroke-width=".9"/><rect x="1078.4" y="230.6" width="4.4" height="4.4" fill="#fff" stroke="#5a6a8a" stroke-width=".8"/><path d="M1079.4 232.79999999999998H1081.8M1080.6 231.6V234.0" stroke="#2a3a6a" stroke-width=".8"/><path d="M1085 231.6H1088M1085 234.0H1088" stroke="#7a8aa8" stroke-width=".9"/><rect x="1089.6" y="222.4" width="4.6" height="13" fill="#b8c8e4" opacity=".8"/><path d="M1101.6 227.4L1104.4 220.6L1107.2 227.4M1102.6 225.2H1106.2" stroke="#3a56b8" stroke-width="1.2" fill="none"/><path d="M1101.8 229.8H1106.8L1101.8 236H1107" stroke="#c03838" stroke-width="1.2" fill="none"/><path d="M1112.4 220.4V235" stroke="#111" stroke-width="1.4"/><path d="M1112.4 236.6L1109.8 232.6H1115Z" fill="#111"/><path d="M1122.6 218.6V238" stroke="#bdbdbd" stroke-width="1.1"/><rect x="1129.4" y="221" width="15.4" height="14.6" fill="#d9d9d9" stroke="#bcbcbc" stroke-width="1"/><rect x="1132.4" y="225" width="9.4" height="7" fill="#e6e6e6" stroke="#c4c4c4" stroke-width=".8"/><path d="M1134.4 228.4H1139.6" stroke="#c0c0c0" stroke-width="1"/><path d="M1080 248.70L1083.4 252.10L1086.8 248.70" stroke="#444" stroke-width="1.2" fill="none"/><path d="M1095 273.94H1325M1172.4 258.37V274.24" stroke="#f1f3f9" stroke-width="1"/><path d="M1080 280.44L1083.4 283.84L1086.8 280.44" stroke="#444" stroke-width="1.2" fill="none"/><path d="M1095 305.68H1325M1172.4 290.11V305.98" stroke="#f1f3f9" stroke-width="1"/><path d="M1095 321.55H1325M1172.4 305.98V321.85" stroke="#f1f3f9" stroke-width="1"/><path d="M1095 337.42H1325M1172.4 321.85V337.72" stroke="#f1f3f9" stroke-width="1"/><path d="M1095 353.29H1325M1172.4 337.72V353.59" stroke="#f1f3f9" stroke-width="1"/><path d="M1095 369.16H1325M1172.4 353.59V369.46" stroke="#f1f3f9" stroke-width="1"/><path d="M1080 375.66L1083.4 379.06L1086.8 375.66" stroke="#444" stroke-width="1.2" fill="none"/><path d="M1095 400.90H1325M1172.4 385.33V401.20" stroke="#f1f3f9" stroke-width="1"/><path d="M1095 416.77H1325M1172.4 401.20V417.07" stroke="#f1f3f9" stroke-width="1"/><path d="M1095 432.64H1325M1172.4 417.07V432.94" stroke="#f1f3f9" stroke-width="1"/><path d="M1095 448.51H1325M1172.4 432.94V448.81" stroke="#f1f3f9" stroke-width="1"/><path d="M1080 455.01L1083.4 458.41L1086.8 455.01" stroke="#444" stroke-width="1.2" fill="none"/><path d="M1095 480.25H1325M1172.4 464.68V480.55" stroke="#f1f3f9" stroke-width="1"/><path d="M1095 496.12H1325M1172.4 480.55V496.42" stroke="#f1f3f9" stroke-width="1"/><path d="M1080 502.62L1083.4 506.02L1086.8 502.62" stroke="#444" stroke-width="1.2" fill="none"/><path d="M1095 527.86H1325M1172.4 512.29V528.16" stroke="#f1f3f9" stroke-width="1"/><path d="M1080 534.36L1083.4 537.76L1086.8 534.36" stroke="#444" stroke-width="1.2" fill="none"/><path d="M1095 559.60H1325M1172.4 544.03V559.90" stroke="#f1f3f9" stroke-width="1"/><path d="M1095 575.47H1325M1172.4 559.90V575.77" stroke="#f1f3f9" stroke-width="1"/><path d="M1095 591.34H1325M1172.4 575.77V591.64" stroke="#f1f3f9" stroke-width="1"/><path d="M1095 607.21H1325M1172.4 591.64V607.51" stroke="#f1f3f9" stroke-width="1"/><path d="M1095 623.08H1325M1172.4 607.51V623.38" stroke="#f1f3f9" stroke-width="1"/><path d="M1095 638.95H1325M1172.4 623.38V629.40" stroke="#f1f3f9" stroke-width="1"/><path d="M1329.2 253.6L1333 249.8L1336.8 253.6" stroke="#505050" stroke-width="1.5" fill="none"/><path d="M1329.2 619.4L1333 623.2L1336.8 619.4" stroke="#505050" stroke-width="1.5" fill="none"/></svg>
<div style="left:3px;top:611px;width:1059px;height:32.5px;background:#f0f0f0;"></div>
<svg style="left:0px;top:611px;" width="1062" height="32" viewBox="0 611 1062 32"><rect x="7.8" y="614.9" width="21.8" height="21" fill="#f0f0f0" stroke="#161616" stroke-width="1.5"/><path d="M23.9 623.2L18.7 626.5L23.9 629.8" stroke="#3c3c3c" stroke-width="1.1" fill="none"/><path d="M16.2 621.7V631.1" stroke="#3c3c3c" stroke-width="1.1"/><rect x="32.8" y="614.9" width="21.3" height="21" fill="#f0f0f0" stroke="#161616" stroke-width="1.5"/><path d="M46.8 623.2L41.2 626.5L46.8 629.8" stroke="#3c3c3c" stroke-width="1.1" fill="none"/><rect x="57.0" y="614.9" width="21.9" height="21" fill="#f0f0f0" stroke="#161616" stroke-width="1.5"/><path d="M65.5 623.2L71 626.5L65.5 629.8" stroke="#3c3c3c" stroke-width="1.1" fill="none"/><rect x="82.0" y="614.9" width="22.0" height="21" fill="#f0f0f0" stroke="#161616" stroke-width="1.5"/><path d="M89.6 623.2L94.6 626.5L89.6 629.8" stroke="#3c3c3c" stroke-width="1.1" fill="none"/><path d="M96.7 621.7V631.1" stroke="#4a4a6a" stroke-width="1.1"/><path d="M110.4 636.6V617.6H150.6" stroke="#8c8c8c" stroke-width="1.3" fill="none"/><path d="M111.6 636V618.8H150" stroke="#5a5a5a" stroke-width="1" fill="none" opacity=".55"/><rect x="112.2" y="619.4" width="38.2" height="16.8" fill="#f6f6f6"/><rect x="154.7" y="617.8" width="48.9" height="19.2" fill="#f1f1f1"/><path d="M154.7 637.2H203.6V617.8" stroke="#6e6e6e" stroke-width="1.3" fill="none"/><path d="M155.7 636H202.4V618.8" stroke="#a8a8a8" stroke-width="1" fill="none"/><path d="M155.1 636.6V618H202.6" stroke="#fff" stroke-width="1" fill="none"/><rect x="206.6" y="617.8" width="49.0" height="19.2" fill="#f1f1f1"/><path d="M206.6 637.2H255.6V617.8" stroke="#6e6e6e" stroke-width="1.3" fill="none"/><path d="M207.6 636H254.4V618.8" stroke="#a8a8a8" stroke-width="1" fill="none"/><path d="M207.0 636.6V618H254.6" stroke="#fff" stroke-width="1" fill="none"/></svg>
<span style="left:117.0px;top:622.69px;font-size:11px;font-weight:400;color:#000;transform:scaleX(0.9210);-webkit-text-stroke:0.15px #000;">Model</span>
<span style="left:160.6px;top:623.69px;font-size:11px;font-weight:400;color:#000;transform:scaleX(0.9245);-webkit-text-stroke:0.15px #000;">Layout1</span>
<span style="left:213.0px;top:623.69px;font-size:11px;font-weight:400;color:#000;transform:scaleX(0.9398);-webkit-text-stroke:0.15px #000;">Layout2</span>
<svg style="left:1px;top:642px" width="1345" height="3" viewBox="1 642 1345 3"><rect x="1" y="642.6" width="1345" height="1.6" fill="#fbfbfb"/></svg>
<svg style="left:1px;top:644px" width="1345" height="5" viewBox="1 644 1345 5"><rect x="1" y="644.1" width="1345" height="4.6" fill="#b4b4b4"/></svg>
<div style="left:1064px;top:640px;width:5px;height:5px;background:#b4b4b4;"></div>
<div style="left:1px;top:649px;width:1345px;height:41px;background:#f1f1f1;"></div>
<div style="left:1px;top:660.8px;width:1328.4px;height:26.4px;background:#fff;border:1px solid #8c8c8c;border-top-color:#6e6e6e;"></div>
<div style="left:1px;top:689.6px;width:1345px;height:30.4px;background:#f0f0f0;"></div>
<svg style="left:0px;top:648px;" width="1346" height="72" viewBox="0 648 1346 72"><path d="M1333.8 670.6L1337.6 666.8L1341.4 670.6M1333.8 678.6L1337.6 682.4L1341.4 678.6" stroke="#505050" stroke-width="1.4" fill="none"/><path d="M55 720V691.4H104.6" stroke="#7a7a7a" stroke-width="1.3" fill="none"/><path d="M56.2 720V692.6H103.6" stroke="#b4b4b4" stroke-width="1" fill="none"/><path d="M104.6 692V720" stroke="#fff" stroke-width="1.2" fill="none"/><rect x="57.2" y="698" width="17.2" height="18" fill="url(#pGrid2)"/><path d="M110.8 713.6H122.4V699.4" stroke="#2a2a2a" stroke-width="1.7" fill="none"/><path d="M118.4 713.6V709.8H122.4" stroke="#333" stroke-width="1" fill="none"/><path d="M174.4 720V691.4H243.4" stroke="#7a7a7a" stroke-width="1.3" fill="none"/><path d="M175.6 720V692.6H242.4" stroke="#b4b4b4" stroke-width="1" fill="none"/><path d="M243.4 692V720" stroke="#fff" stroke-width="1.2" fill="none"/><path d="M177.4 720V694" stroke="#6e6e6e" stroke-width="1.2" fill="none"/><path d="M182.3 713.6V699.6M180.4 699.6H193" stroke="#2a2a2a" stroke-width="1.6" fill="none"/><path d="M185 699.6V704.8" stroke="#333" stroke-width="1" fill="none"/><path d="M185 702.6V712L187.1 710.1L188.8 713.7L190.1 713.1L188.4 709.7H191.2Z" fill="#f4f4f4" stroke="#7a7a7a" stroke-width=".8"/><path d="M247.4 707.6H263.6M253.6 699V716M257.6 699V716" stroke="#1a1a1a" stroke-width="1.7" fill="none"/><path d="M317 720V691.4H387" stroke="#7a7a7a" stroke-width="1.3" fill="none"/><path d="M318.2 720V692.6H386" stroke="#b4b4b4" stroke-width="1" fill="none"/><path d="M387 692V720" stroke="#fff" stroke-width="1.2" fill="none"/><path d="M320 720V694" stroke="#6e6e6e" stroke-width="1.2" fill="none"/><path d="M323.4 707.6H334.6M336.8 699V716" stroke="#2a2a2a" stroke-width="1.6" fill="none"/></svg>
<span style="left:8.2px;top:701.54px;font-size:12px;font-weight:400;color:#000;transform:scaleX(0.8991);-webkit-text-stroke:0.3px #000;">Snap :</span>
<span style="left:78.8px;top:701.54px;font-size:12px;font-weight:400;color:#1c1c8c;transform:scaleX(0.9042);-webkit-text-stroke:0.3px #1c1c8c;">Grid</span>
<span style="left:131.0px;top:701.54px;font-size:12px;font-weight:400;color:#000;transform:scaleX(0.8696);-webkit-text-stroke:0.3px #000;">ORTHO</span>
<span style="left:200.3px;top:701.54px;font-size:12px;font-weight:400;color:#1c1c8c;transform:scaleX(0.8925);-webkit-text-stroke:0.3px #1c1c8c;">OSNAP</span>
<span style="left:270.0px;top:701.54px;font-size:12px;font-weight:400;color:#000;transform:scaleX(0.8397);-webkit-text-stroke:0.3px #000;">OTRACK</span>
<span style="left:343.2px;top:701.54px;font-size:12px;font-weight:400;color:#1c1c8c;transform:scaleX(0.9279);-webkit-text-stroke:0.3px #1c1c8c;">Nearest</span>
<span style="left:1113.0px;top:701.84px;font-size:12px;font-weight:400;color:#000;transform:scaleX(0.9356);-webkit-text-stroke:0.3px #000;">L=6.32, Dx=6.00, Dy=2.00</span>
<span style="left:1254.6px;top:701.84px;font-size:12px;font-weight:400;color:#000;transform:scaleX(0.8872);-webkit-text-stroke:0.3px #000;">P(17.00, 26.00)</span>
<span style="left:24.0px;top:13.04px;font-size:12px;font-weight:400;color:#000;transform:scaleX(0.7797);-webkit-text-stroke:0.3px #000;">ENRSTEEL</span>
<span style="left:79.3px;top:13.04px;font-size:12px;font-weight:400;color:#000;transform:scaleX(0.9750);-webkit-text-stroke:0.3px #000;">-</span>
<span style="left:86.8px;top:13.04px;font-size:12px;font-weight:400;color:#000;transform:scaleX(1.0031);-webkit-text-stroke:0.3px #000;">[Untitled1]</span>
<span style="left:39.8px;top:37.64px;font-size:12px;font-weight:400;color:#000;transform:scaleX(0.9150);-webkit-text-stroke:0.3px #000;">File</span>
<span style="left:76.4px;top:37.64px;font-size:12px;font-weight:400;color:#000;transform:scaleX(0.9474);-webkit-text-stroke:0.3px #000;">Edit</span>
<span style="left:115.0px;top:37.64px;font-size:12px;font-weight:400;color:#000;transform:scaleX(0.9459);-webkit-text-stroke:0.3px #000;">View</span>
<span style="left:158.5px;top:37.64px;font-size:12px;font-weight:400;color:#000;transform:scaleX(0.9316);-webkit-text-stroke:0.3px #000;">Draw</span>
<span style="left:204.0px;top:37.64px;font-size:12px;font-weight:400;color:#000;transform:scaleX(0.9464);-webkit-text-stroke:0.3px #000;">Roof</span>
<span style="left:247.3px;top:37.64px;font-size:12px;font-weight:400;color:#000;transform:scaleX(0.9999);-webkit-text-stroke:0.3px #000;">Dimension</span>
<span style="left:322.3px;top:37.64px;font-size:12px;font-weight:400;color:#000;transform:scaleX(1.0263);-webkit-text-stroke:0.3px #000;">Draft</span>
<span style="left:367.0px;top:37.64px;font-size:12px;font-weight:400;color:#000;transform:scaleX(0.9510);-webkit-text-stroke:0.3px #000;">Analysis</span>
<span style="left:428.0px;top:37.64px;font-size:12px;font-weight:400;color:#000;transform:scaleX(1.0190);-webkit-text-stroke:0.3px #000;">Window</span>
<span style="left:490.3px;top:37.64px;font-size:12px;font-weight:400;color:#000;transform:scaleX(1.0005);-webkit-text-stroke:0.3px #000;">Help</span>
</body></html>
